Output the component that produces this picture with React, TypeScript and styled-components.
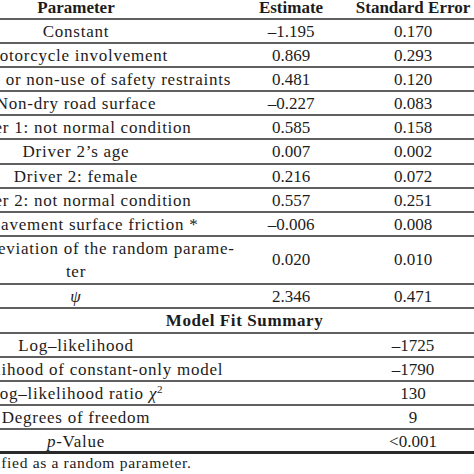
import React from "react"
import styled, { createGlobalStyle } from "styled-components"

const GlobalStyle = createGlobalStyle`
  html, body {
    margin: 0;
    padding: 0;
    background: #ffffff;
    overflow: hidden;
  }
  body {
    width: 474px;
    height: 474px;
    font-family: "Liberation Serif", "Times New Roman", serif;
    color: #1c1c1c;
  }
`

const COLS = "344px 86px 158px"
const PITCH = 24.15

const Page = styled.div`
  width: 474px;
  height: 474px;
  overflow: hidden;
`

const Table = styled.div`
  width: 588px;
  margin: -4.45px 0 0 -96px;
`

const Row = styled.div<{ $lines?: number; $last?: boolean }>`
  display: grid;
  grid-template-columns: ${COLS};
  box-sizing: border-box;
  height: ${(p) => (p.$lines ?? 1) * PITCH}px;
  border-bottom: ${(p) => (p.$last ? "3px solid #2a2a2a" : "2px solid #606060")};
`

const Cell = styled.div<{ $label?: boolean; $bold?: boolean }>`
  display: flex;
  align-items: center;
  justify-content: center;
  text-align: center;
  font-size: 17px;
  line-height: 22.5px;
  white-space: nowrap;
  letter-spacing: ${(p) => (p.$label ? "0.75px" : "0")};
  font-weight: ${(p) => (p.$bold ? 700 : 400)};
  padding-top: 1px;
`

const SpanCell = styled.div`
  grid-column: 1 / -1;
  display: flex;
  align-items: center;
  justify-content: center;
  padding-left: 93px;
  font-size: 17px;
  font-weight: 700;
  letter-spacing: 0.6px;
  padding-top: 1px;
`

const Sym = styled.i`
  font-style: italic;
`

const Sup = styled.sup`
  font-size: 11px;
  line-height: 0;
  vertical-align: 6px;
`

const Footnote = styled.div`
  margin-left: -52px;
  font-size: 15.6px;
  line-height: 14px;
  letter-spacing: 0.65px;
  white-space: nowrap;
  padding-top: 2px;
`

type Line = { label: React.ReactNode; est?: string; se: string; lines?: number }

const params: Line[] = [
  { label: "Constant", est: "–1.195", se: "0.170" },
  { label: "Motorcycle involvement", est: "0.869", se: "0.293" },
  { label: "Proper use or non-use of safety restraints", est: "0.481", se: "0.120" },
  { label: "Non-dry road surface", est: "–0.227", se: "0.083" },
  { label: "Driver 1: not normal condition", est: "0.585", se: "0.158" },
  { label: "Driver 2’s age", est: "0.007", se: "0.002" },
  { label: "Driver 2: female", est: "0.216", se: "0.072" },
  { label: "Driver 2: not normal condition", est: "0.557", se: "0.251" },
  { label: "Low pavement surface friction *", est: "–0.006", se: "0.008" },
  {
    label: (
      <span>
        Standard deviation of the random parame-
        <br />
        ter
      </span>
    ),
    est: "0.020",
    se: "0.010",
    lines: 2
  },
  { label: <Sym>ψ</Sym>, est: "2.346", se: "0.471" }
]

const fit: Line[] = [
  { label: "Log–likelihood", se: "–1725" },
  { label: "Log–likelihood of constant-only model", se: "–1790" },
  {
    label: (
      <span>
        Log–likelihood ratio <Sym>χ</Sym>
        <Sup>2</Sup>
      </span>
    ),
    se: "130"
  },
  { label: "Degrees of freedom", se: "9" },
  {
    label: (
      <span>
        <Sym>p</Sym>-Value
      </span>
    ),
    se: "<0.001"
  }
]

export default function App() {
  return (
    <Page>
      <GlobalStyle />
      <Table>
        <Row>
          <Cell $bold>Parameter</Cell>
          <Cell $bold>Estimate</Cell>
          <Cell $bold>Standard Error</Cell>
        </Row>
        {params.map((r, i) => (
          <Row key={i} $lines={r.lines}>
            <Cell $label>{r.label}</Cell>
            <Cell>{r.est}</Cell>
            <Cell>{r.se}</Cell>
          </Row>
        ))}
        <Row>
          <SpanCell>Model Fit Summary</SpanCell>
        </Row>
        {fit.map((r, i) => (
          <Row key={i} $last={i === fit.length - 1}>
            <Cell $label>{r.label}</Cell>
            <Cell />
            <Cell>{r.se}</Cell>
          </Row>
        ))}
      </Table>
      <Footnote>* Identified as a random parameter.</Footnote>
    </Page>
  )
}
